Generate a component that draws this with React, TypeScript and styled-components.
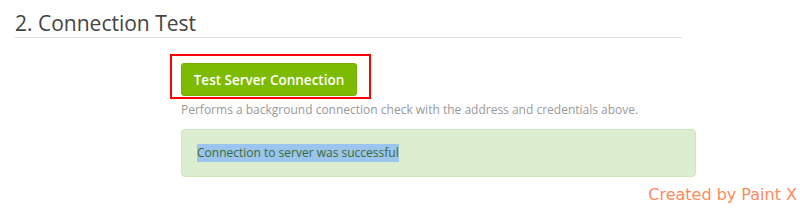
import React from "react";
import styled, { createGlobalStyle } from "styled-components";

const Global = createGlobalStyle`
  html, body { margin: 0; padding: 0; background: #fff; }
  body { font-family: "Open Sans", sans-serif; width: 800px; height: 209px; overflow: hidden; }
`;

const Page = styled.div`
  position: relative;
  width: 800px;
  height: 209px;
  padding: 9px 0 0 15px;
  box-sizing: border-box;
`;

const Heading = styled.h2`
  margin: 0;
  width: 667px;
  font-family: "Open Sans", sans-serif;
  font-weight: 400;
  font-size: 21px;
  line-height: 28px;
  color: #444;
  border-bottom: 1px solid #ddd;
`;

const Body = styled.div`
  display: flex;
  flex-direction: column;
  align-items: flex-start;
  padding-left: 166px;
  padding-top: 25px;
`;

const Button = styled.button`
  width: 176px;
  height: 33px;
  border: 1px solid #76ad00;
  border-radius: 3px;
  background: #7dbb00;
  color: #fff;
  font-family: "Open Sans", sans-serif;
  font-weight: 600;
  font-size: 13.5px;
  padding: 0;
  cursor: pointer;
`;

const Highlight = styled.div`
  position: absolute;
  left: 170px;
  top: 54px;
  width: 201px;
  height: 45px;
  border: 2px solid #f00;
  box-sizing: border-box;
  pointer-events: none;
`;

const Help = styled.p`
  margin: 5px 0 0;
  font-size: 12px;
  line-height: 18px;
  color: #999;
`;

const Alert = styled.div`
  margin-top: 10px;
  width: 515px;
  height: 48px;
  box-sizing: border-box;
  background: #dcedd0;
  border: 1px solid #cfe6bf;
  border-radius: 4px;
  padding: 0 15px;
  display: flex;
  align-items: center;
  font-size: 12px;
  color: #3c6b2d;
`;

const Selected = styled.span`
  background: #9bc4ee;
  line-height: 18px;
`;

const Watermark = styled.div`
  position: absolute;
  right: 3px;
  bottom: 5px;
  font-family: "DejaVu Sans", Verdana, sans-serif;
  font-size: 16px;
  line-height: 18px;
  color: #ff8a5c;
`;

export default function App() {
  return (
    <>
      <Global />
      <Page>
        <Heading>2. Connection Test</Heading>
        <Body>
          <Button>Test Server Connection</Button>
          <Help>Performs a background connection check with the address and credentials above.</Help>
          <Alert>
            <Selected>Connection to server was successful</Selected>
          </Alert>
        </Body>
        <Highlight />
        <Watermark>Created by Paint X</Watermark>
      </Page>
    </>
  );
}
